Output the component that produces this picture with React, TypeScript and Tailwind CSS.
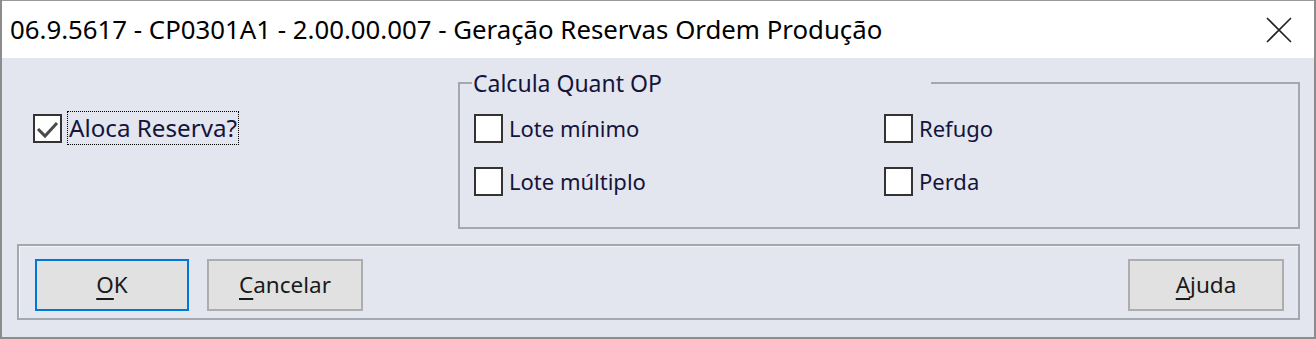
import { useState } from 'react';

function Box({ checked }: { checked: boolean }) {
    return (
        <span className="flex h-[29px] w-[29px] shrink-0 items-center justify-center border-2 border-[#333333] bg-white">
            {checked && (
                <svg width="25" height="25" viewBox="0 0 25 25" fill="none">
                    <path d="M3 13 L10 20 L22 7" stroke="#4a4a4a" strokeWidth="3" />
                </svg>
            )}
        </span>
    );
}

function Check({ label, checked, focused, big, onToggle }: { label: string; checked: boolean; focused?: boolean; big?: boolean; onToggle: () => void }) {
    return (
        <button type="button" onClick={onToggle} className="flex h-[34px] items-center gap-[5px] text-left">
            <Box checked={checked} />
            <span
                className={
                    focused
                        ? 'border border-dotted border-black px-[1px] leading-[32px] text-[#14143c]'
                        : 'px-[1px] leading-[32px] text-[#14143c]'
                }
            >
                <span className={big ? 'text-[24.2px]' : 'text-[22px]'}>{label}</span>
            </span>
        </button>
    );
}

function WinButton({ accel, rest, primary }: { accel: string; rest: string; primary?: boolean }) {
    return (
        <button
            type="button"
            className={
                primary
                    ? 'h-[52px] w-[154px] border-2 border-[#0078d7] bg-[#e1e1e1] text-[22.5px] text-[#1a1a1a]'
                    : 'h-[52px] w-[156px] border-2 border-[#adadad] bg-[#e1e1e1] text-[22.5px] text-[#1a1a1a]'
            }
        >
            <u className="underline-offset-[5px]">{accel}</u>
            {rest}
        </button>
    );
}

export default function App() {
    const [opts, setOpts] = useState({
        aloca: true,
        loteMinimo: false,
        loteMultiplo: false,
        refugo: false,
        perda: false
    });

    const toggle = (k: keyof typeof opts) => setOpts({ ...opts, [k]: !opts[k] });

    return (
        <div className="flex h-[339px] w-[1316px] flex-col border-x-2 border-[#8c8c8c] bg-[#e3e6ee] font-['Noto_Sans','Open_Sans',sans-serif] text-[22px]">
            {/* Title bar */}
            <div className="flex h-[58px] shrink-0 items-center justify-between border-t border-[#9a9a9a] bg-white pl-[8px] pr-[22px]">
                <span className="text-[25.8px] text-black">06.9.5617 - CP0301A1 - 2.00.00.007 - Geração Reservas Ordem Produção</span>
                <svg width="26" height="26" viewBox="0 0 26 26" fill="none">
                    <path d="M1 1 L25 25 M25 1 L1 25" stroke="#222" strokeWidth="1.6" />
                </svg>
            </div>

            {/* Options */}
            <div className="flex h-[186px] shrink-0">
                <div className="w-[456px] pl-[31px] pt-[53px]">
                    <Check label="Aloca Reserva?" checked={opts.aloca} focused big onToggle={() => toggle('aloca')} />
                </div>
                <fieldset className="mt-[10px] h-[161px] w-[842px] border-2 border-[#a3a7b0] px-0 pl-[14px]">
                    <legend className="ml-[-2px] w-[459px] pl-[1px] text-left text-[23px] leading-[30px] text-[#14143c]">Calcula Quant OP</legend>
                    <div className="mt-[13px] grid grid-cols-[410px_1fr] gap-y-[19px]">
                        <Check label="Lote mínimo" checked={opts.loteMinimo} onToggle={() => toggle('loteMinimo')} />
                        <Check label="Refugo" checked={opts.refugo} onToggle={() => toggle('refugo')} />
                        <Check label="Lote múltiplo" checked={opts.loteMultiplo} onToggle={() => toggle('loteMultiplo')} />
                        <Check label="Perda" checked={opts.perda} onToggle={() => toggle('perda')} />
                    </div>
                </fieldset>
            </div>

            {/* Buttons */}
            <div className="ml-[15px] flex h-[76px] w-[1283px] shrink-0 items-start gap-[18px] border-2 border-[#a3a7b0] pl-[16px] pr-[14px] pt-[13px] shadow-[inset_1px_1px_0_#f4f6fa]">
                <WinButton accel="O" rest="K" primary />
                <WinButton accel="C" rest="ancelar" />
                <div className="flex-1" />
                <WinButton accel="A" rest="juda" />
            </div>

            <div className="flex-1" />
            <div className="h-[2px] shrink-0 bg-[#8c8c8c]" />
        </div>
    );
}
